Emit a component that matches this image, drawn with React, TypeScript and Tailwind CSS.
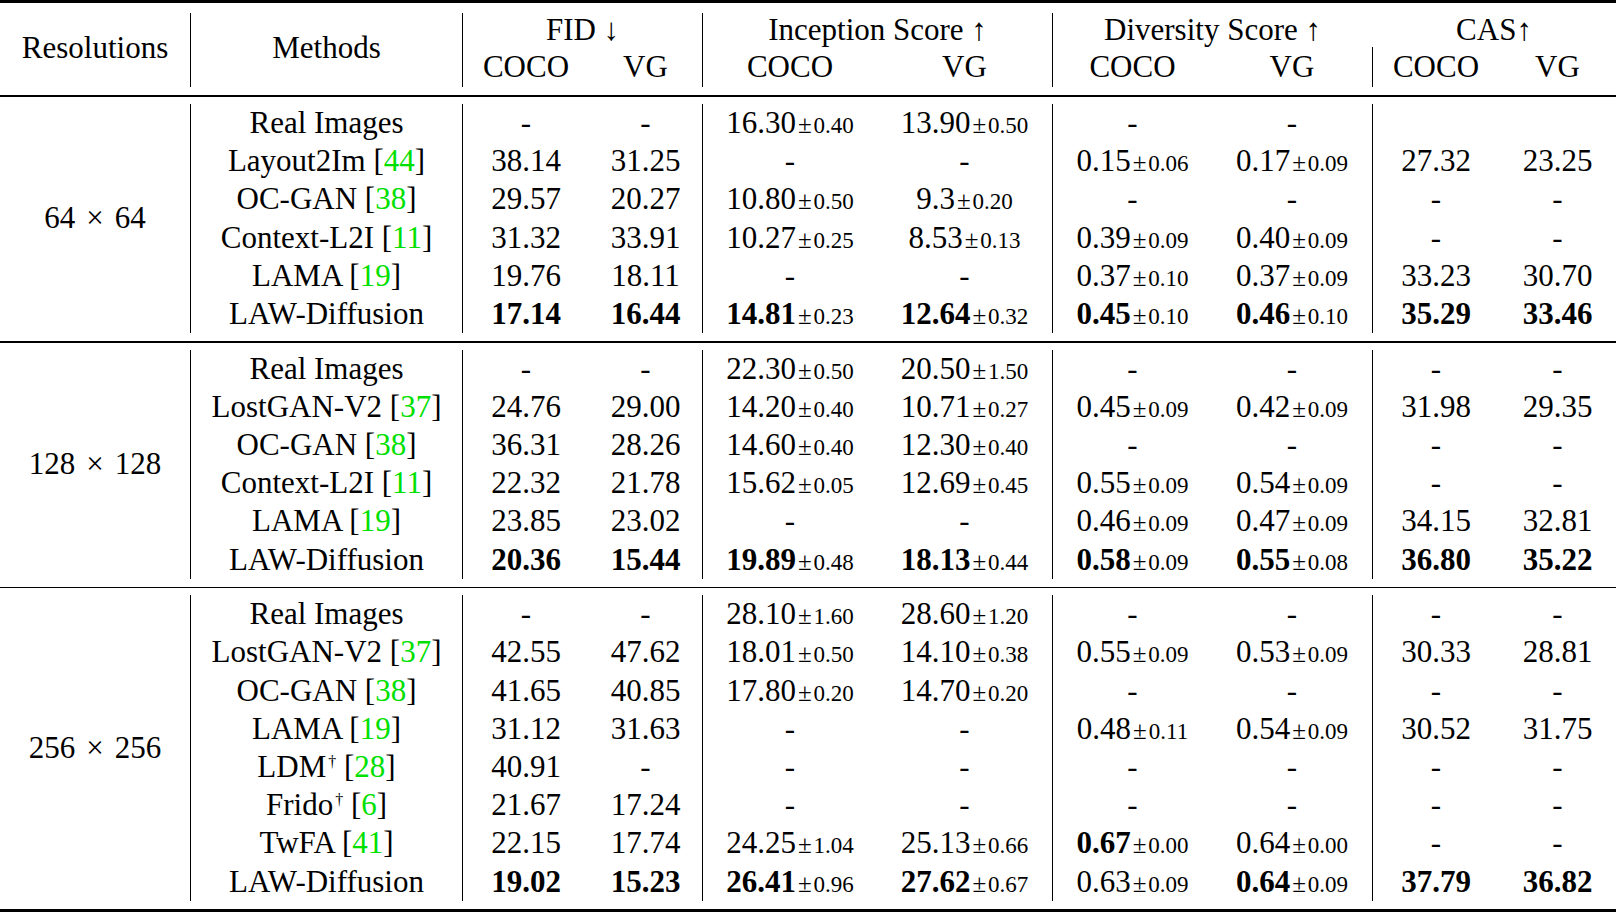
import React from "react"

// column template shared by header and body grids
const COLS = "grid-cols-[190px_272px_127px_113px_175px_175px_160px_160px_127px_1fr]"

type Method = { name: string; dagger?: boolean; cite?: string }
type Row = { method: Method; cells: string[] }
type Group = { label: string; rows: Row[] }

const groups: Group[] = [
  {
    label: "64",
    rows: [
      { method: { name: "Real Images" }, cells: ["-", "-", "16.30|0.40", "13.90|0.50", "-", "-", "", ""] },
      { method: { name: "Layout2Im", cite: "44" }, cells: ["38.14", "31.25", "-", "-", "0.15|0.06", "0.17|0.09", "27.32", "23.25"] },
      { method: { name: "OC-GAN", cite: "38" }, cells: ["29.57", "20.27", "10.80|0.50", "9.3|0.20", "-", "-", "-", "-"] },
      { method: { name: "Context-L2I", cite: "11" }, cells: ["31.32", "33.91", "10.27|0.25", "8.53|0.13", "0.39|0.09", "0.40|0.09", "-", "-"] },
      { method: { name: "LAMA", cite: "19" }, cells: ["19.76", "18.11", "-", "-", "0.37|0.10", "0.37|0.09", "33.23", "30.70"] },
      { method: { name: "LAW-Diffusion" }, cells: ["*17.14", "*16.44", "*14.81|0.23", "*12.64|0.32", "*0.45|0.10", "*0.46|0.10", "*35.29", "*33.46"] },
    ],
  },
  {
    label: "128",
    rows: [
      { method: { name: "Real Images" }, cells: ["-", "-", "22.30|0.50", "20.50|1.50", "-", "-", "-", "-"] },
      { method: { name: "LostGAN-V2", cite: "37" }, cells: ["24.76", "29.00", "14.20|0.40", "10.71|0.27", "0.45|0.09", "0.42|0.09", "31.98", "29.35"] },
      { method: { name: "OC-GAN", cite: "38" }, cells: ["36.31", "28.26", "14.60|0.40", "12.30|0.40", "-", "-", "-", "-"] },
      { method: { name: "Context-L2I", cite: "11" }, cells: ["22.32", "21.78", "15.62|0.05", "12.69|0.45", "0.55|0.09", "0.54|0.09", "-", "-"] },
      { method: { name: "LAMA", cite: "19" }, cells: ["23.85", "23.02", "-", "-", "0.46|0.09", "0.47|0.09", "34.15", "32.81"] },
      { method: { name: "LAW-Diffusion" }, cells: ["*20.36", "*15.44", "*19.89|0.48", "*18.13|0.44", "*0.58|0.09", "*0.55|0.08", "*36.80", "*35.22"] },
    ],
  },
  {
    label: "256",
    rows: [
      { method: { name: "Real Images" }, cells: ["-", "-", "28.10|1.60", "28.60|1.20", "-", "-", "-", "-"] },
      { method: { name: "LostGAN-V2", cite: "37" }, cells: ["42.55", "47.62", "18.01|0.50", "14.10|0.38", "0.55|0.09", "0.53|0.09", "30.33", "28.81"] },
      { method: { name: "OC-GAN", cite: "38" }, cells: ["41.65", "40.85", "17.80|0.20", "14.70|0.20", "-", "-", "-", "-"] },
      { method: { name: "LAMA", cite: "19" }, cells: ["31.12", "31.63", "-", "-", "0.48|0.11", "0.54|0.09", "30.52", "31.75"] },
      { method: { name: "LDM", dagger: true, cite: "28" }, cells: ["40.91", "-", "-", "-", "-", "-", "-", "-"] },
      { method: { name: "Frido", dagger: true, cite: "6" }, cells: ["21.67", "17.24", "-", "-", "-", "-", "-", "-"] },
      { method: { name: "TwFA", cite: "41" }, cells: ["22.15", "17.74", "24.25|1.04", "25.13|0.66", "*0.67|0.00", "0.64|0.00", "-", "-"] },
      { method: { name: "LAW-Diffusion" }, cells: ["*19.02", "*15.23", "*26.41|0.96", "*27.62|0.67", "0.63|0.09", "*0.64|0.09", "*37.79", "*36.82"] },
    ],
  },
]

function Value({ raw }: { raw: string }) {
  const bold = raw.startsWith("*")
  const [main, pm] = (bold ? raw.slice(1) : raw).split("|")
  return (
    <>
      <span className={bold ? "font-bold" : ""}>{main}</span>
      {pm && (
        <>
          <span className="text-[25px] mx-[2px]">±</span>
          <span className="text-[23px]">{pm}</span>
        </>
      )}
    </>
  )
}

function MethodName({ m }: { m: Method }) {
  return (
    <>
      {m.name}
      {m.dagger && <sup className="text-[16px] relative -top-[10px] ml-[2px]">†</sup>}
      {m.cite && (
        <>
          {" "}[<span className="text-[#00e000]">{m.cite}</span>]
        </>
      )}
    </>
  )
}

function Rule({ thick }: { thick?: boolean }) {
  return <div className={thick ? "h-[3px] bg-black" : "h-[1.5px] bg-black"} />
}

function Header() {
  const subs = ["COCO", "VG", "COCO", "VG", "COCO", "VG", "COCO", "VG"]
  return (
    <div className={`grid ${COLS} grid-rows-[34px_40px] pt-[9.7px] pb-[8.8px]`}>
      <div className="row-span-2 flex items-center justify-center pb-[3px]">Resolutions</div>
      <div className="row-span-2 flex items-center justify-center border-l border-black pb-[3px]">Methods</div>
      <div className="col-span-2 border-l border-black text-center leading-[34px]">FID ↓</div>
      <div className="col-span-2 border-l border-black text-center leading-[34px]">Inception Score ↑</div>
      <div className="col-span-2 border-l border-black text-center leading-[34px]">Diversity Score ↑</div>
      <div className="col-span-2 text-center leading-[34px]">CAS↑</div>
      {subs.map((s, i) => (
        <div
          key={i}
          className={`text-center leading-[40px] ${i % 2 === 0 ? "border-l border-black" : ""}`}
        >
          {s}
        </div>
      ))}
    </div>
  )
}

function GroupBlock({ group }: { group: Group }) {
  return (
    <div className="pt-[7px] pb-[8px]">
      <div className={`grid ${COLS} auto-rows-[38.2px]`}>
        <div
          className={`${group.rows.length === 8 ? "row-span-8" : "row-span-6"} flex items-center justify-center`}
        >
          {group.label}
          <span className="mx-[11px]">×</span>
          {group.label}
        </div>
        {group.rows.map((row, r) => (
          <React.Fragment key={r}>
            <div className="border-l border-black text-center whitespace-nowrap">
              <MethodName m={row.method} />
            </div>
            {row.cells.map((c, i) => (
              <div
                key={i}
                className={`text-center whitespace-nowrap ${i % 2 === 0 ? "border-l border-black" : ""}`}
              >
                <Value raw={c} />
              </div>
            ))}
          </React.Fragment>
        ))}
      </div>
    </div>
  )
}

export default function App() {
  return (
    <div className="w-[1616px] h-[915px] bg-white text-black font-['Liberation_Serif',serif] text-[31px] leading-[38.2px]">
      <Rule thick />
      <Header />
      <Rule />
      {groups.map((g, i) => (
        <React.Fragment key={g.label}>
          <GroupBlock group={g} />
          {i < groups.length - 1 && <Rule />}
        </React.Fragment>
      ))}
      <Rule thick />
    </div>
  )
}
